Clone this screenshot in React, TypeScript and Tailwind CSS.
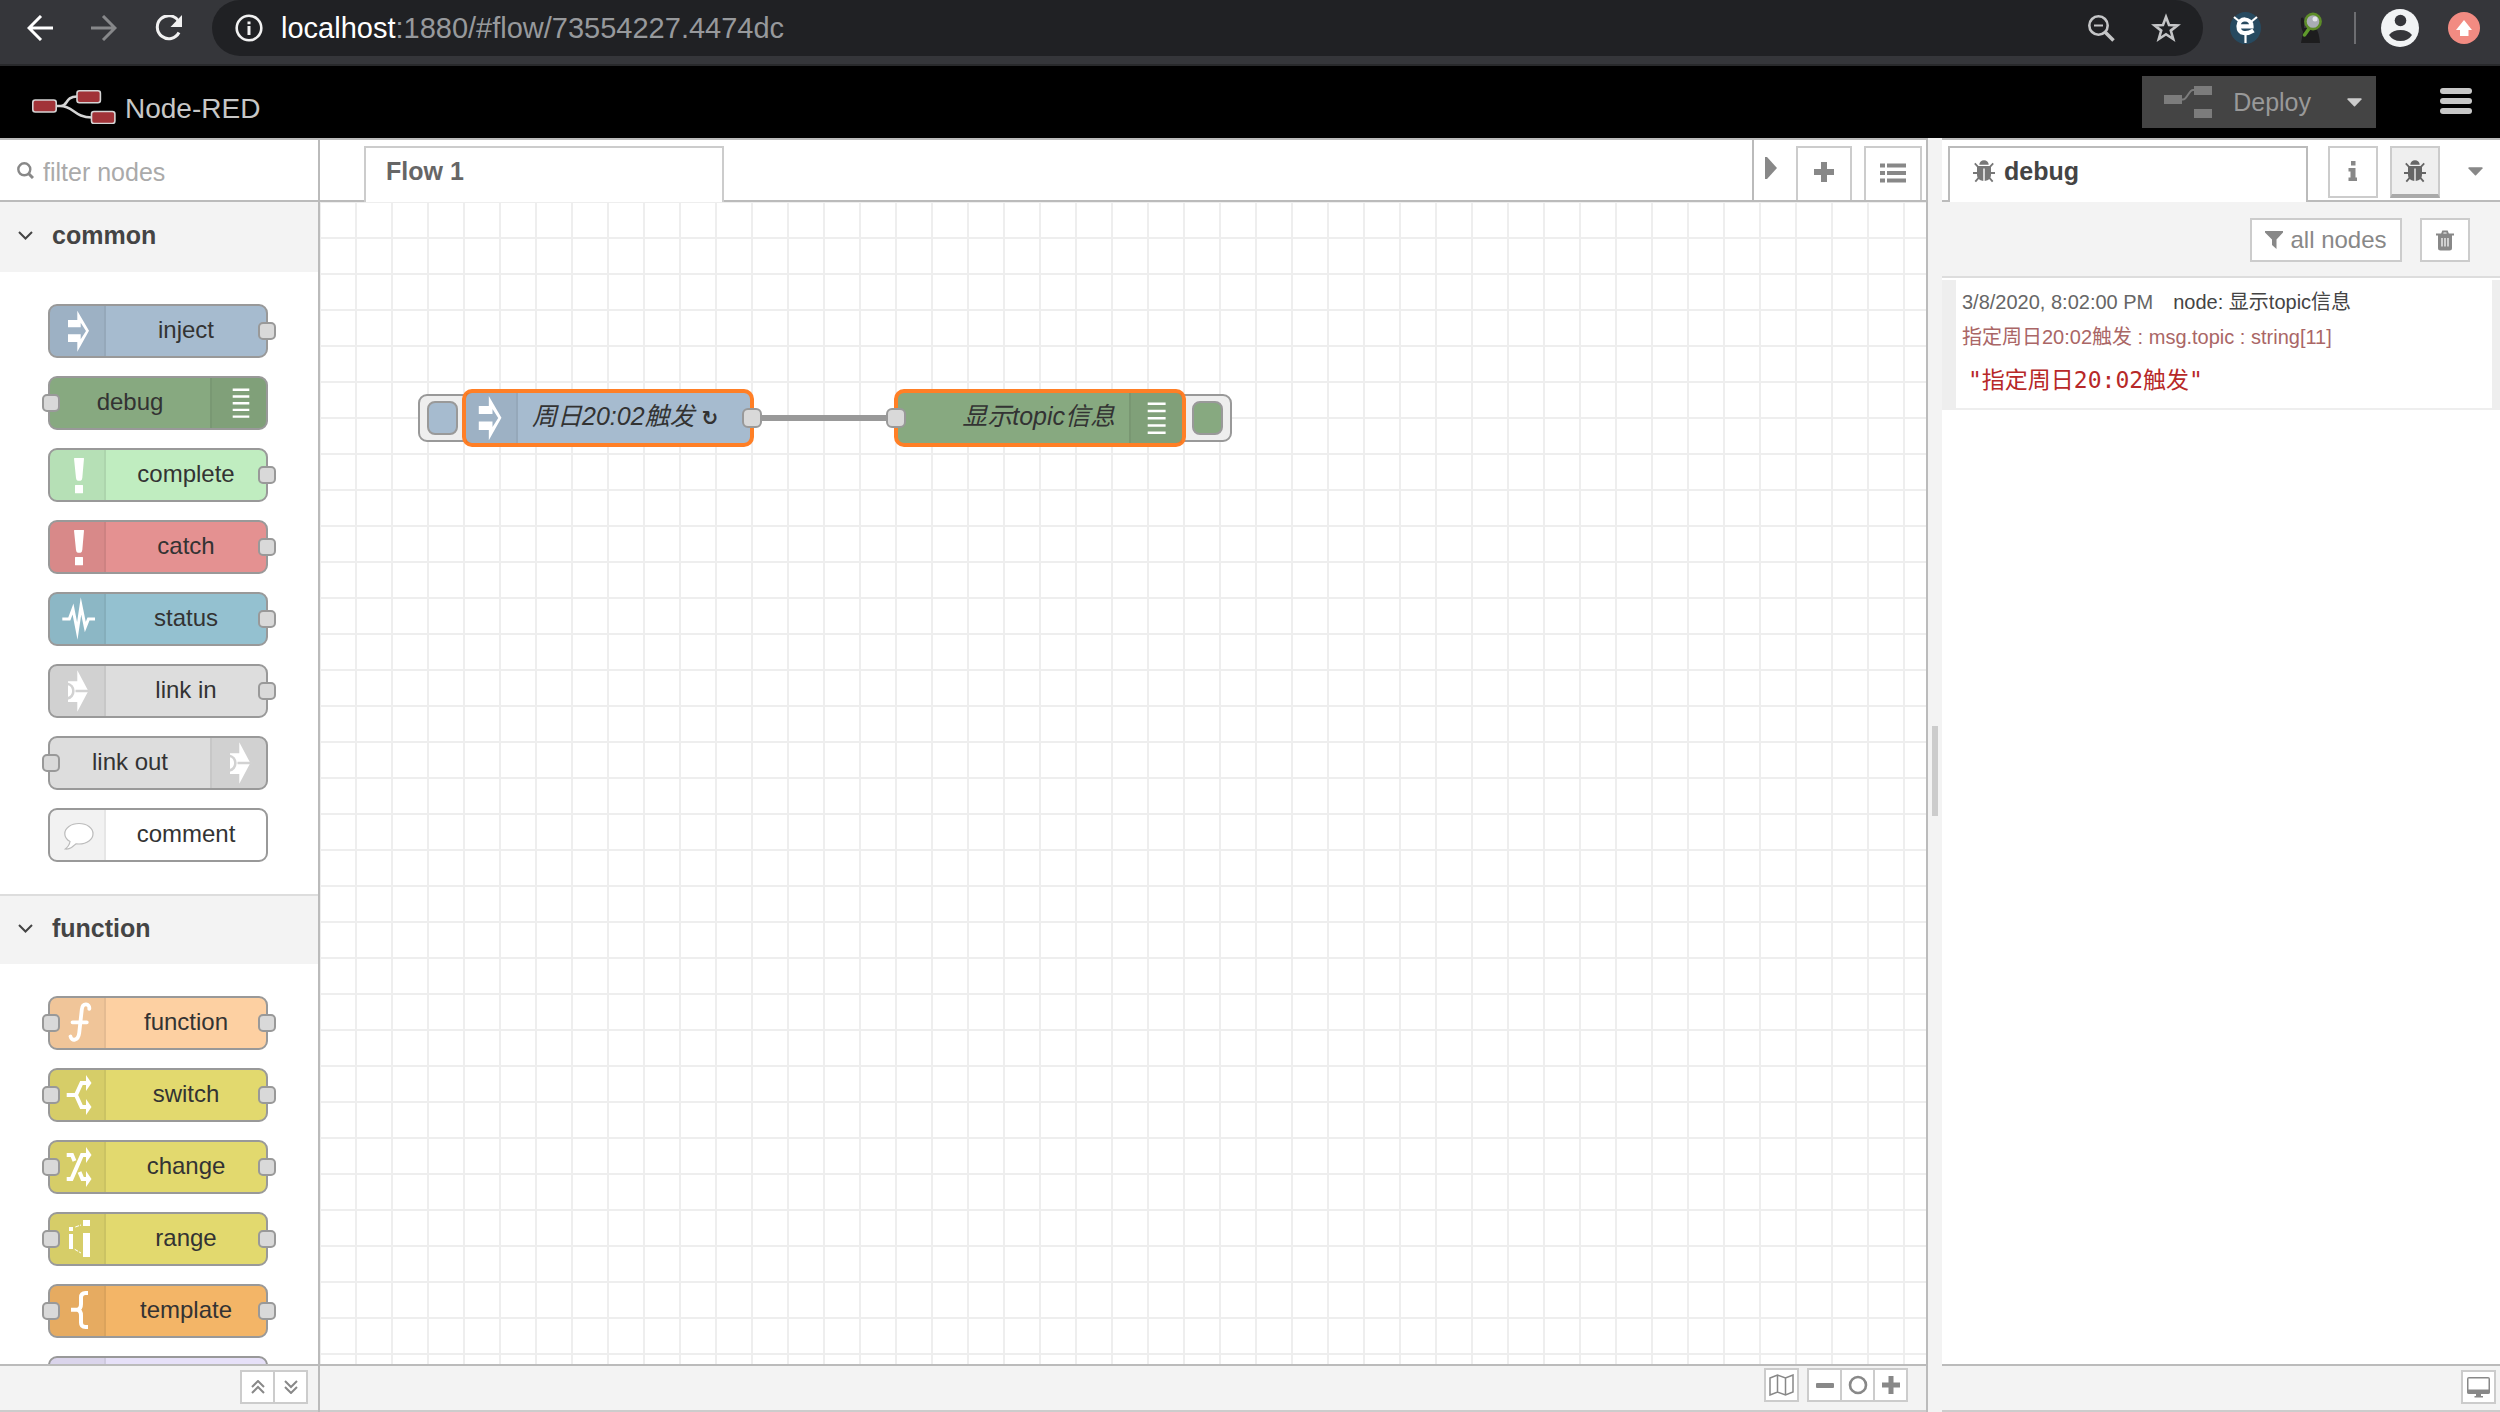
import type { ReactNode } from 'react';

type IconName =
  | 'inject' | 'debug' | 'alert' | 'status' | 'link' | 'comment'
  | 'function' | 'switch' | 'change' | 'range' | 'template' | 'delay';

interface PaletteNode {
  label?: string;
  icon: IconName;
  color: string;
  input?: boolean;
  output?: boolean;
  right?: boolean;
}

const commonNodes: PaletteNode[] = [
  { label: 'inject', icon: 'inject', color: 'bg-[#a6bbcf]', output: true },
  { label: 'debug', icon: 'debug', color: 'bg-[#87a980]', input: true, right: true },
  { label: 'complete', icon: 'alert', color: 'bg-[#c0edc0]', output: true },
  { label: 'catch', icon: 'alert', color: 'bg-[#e49191]', output: true },
  { label: 'status', icon: 'status', color: 'bg-[#94c1d0]', output: true },
  { label: 'link in', icon: 'link', color: 'bg-[#dddddd]', output: true },
  { label: 'link out', icon: 'link', color: 'bg-[#dddddd]', input: true, right: true },
  { label: 'comment', icon: 'comment', color: 'bg-white' },
];

const functionNodes: PaletteNode[] = [
  { label: 'function', icon: 'function', color: 'bg-[#fdd0a2]', input: true, output: true },
  { label: 'switch', icon: 'switch', color: 'bg-[#e2d96e]', input: true, output: true },
  { label: 'change', icon: 'change', color: 'bg-[#e2d96e]', input: true, output: true },
  { label: 'range', icon: 'range', color: 'bg-[#e2d96e]', input: true, output: true },
  { label: 'template', icon: 'template', color: 'bg-[#f3b567]', input: true, output: true },
  { icon: 'delay', color: 'bg-[#e6e0f8]', input: true, output: true },
];

const iconShapes: Record<IconName, ReactNode> = {
  inject: (
    <path fill="#fff" d="M9 14H18.3V4.7L30 24.7 18.3 45.7V36H9V28.3H21.7V33.3L27 25 21.7 16.7V21.3H9Z" />
  ),
  debug: (
    <path stroke="#fff" strokeWidth="2.4" d="M11.7 11.8H28.3M11.7 18.5H28.3M11.7 25.2H28.3M11.7 31.9H28.3M11.7 38.6H28.3" />
  ),
  alert: (
    <path fill="#fff" d="M15.7 8H24.5Q25 8 25 8.5L23.3 28Q23 30.7 21.5 30.7H18.8Q17.3 30.7 17 28L15 8.5Q15 8 15.7 8ZM16.5 35H23.5Q24 35 24 35.5V42.8Q24 43.3 23.5 43.3H16.5Q16 43.3 16 42.8V35.5Q16 35 16.5 35Z" />
  ),
  status: (
    <path fill="none" stroke="#fff" strokeWidth="3" strokeMiterlimit="12" d="M3.3 25H10.3L14 15 18.3 37 22 12 26.3 33 29.5 25H37" />
  ),
  link: (
    <>
      <path fill="#fff" d="M9 15.3H18.3V4.3L29.3 25 18.3 45.7V36H9Z" />
      <path fill="none" stroke="#d2d2d2" strokeWidth="2.6" d="M8.5 17.7A7.6 7.6 0 0 1 8.5 32.5M16.5 25H31" />
    </>
  ),
  comment: (
    <path fill="#fff" stroke="#bbb" strokeWidth="1.2" d="M20 13.5C28 13.5 34 18 34 23.7S28 34 20 34L17 33.8 12.5 37.5Q9.5 39.5 6.3 39Q10.5 35.5 11 31.5C8 29.8 5.8 27 5.8 23.7 5.8 18 12 13.5 20 13.5Z" />
  ),
  function: (
    <path fill="none" stroke="#fff" strokeWidth="3.8" strokeLinecap="round" strokeLinejoin="round" d="M30.3 10.8C31 5.5 23.5 4 22.8 11.5L20.200 35C19.200 43 12.500 43.500 11.500 38.500M13.500 24.300H27.800" />
  ),
  switch: (
    <>
      <path fill="none" stroke="#fff" strokeWidth="4" d="M7.7 25H16.5M28 13H22.5L17 25 22.5 37H28" />
      <path fill="#fff" d="M27 5L32.5 13 27 21ZM27 29L32.5 37 27 45Z" />
    </>
  ),
  change: (
    <>
      <path fill="none" stroke="#fff" strokeWidth="4" d="M7.7 13H13L15.5 19M7.7 37H12.5L23 13H28M20.5 30L23.5 37H28" />
      <path fill="#fff" d="M27 5L32.5 13 27 21ZM27 29L32.5 37 27 45Z" />
    </>
  ),
  range: (
    <>
      <path fill="#fff" d="M10 13H14V17H10ZM10 20H14V35H10ZM24 6H31V12H24ZM24 19H31V43H24Z" />
      <path stroke="#fff" strokeDasharray="4 1" d="M16.3 13L22 11M15.7 35.3L22 39" />
    </>
  ),
  template: (
    <path fill="none" stroke="#fff" strokeWidth="4" d="M29 7H26.5Q22 7 22 11.5V18Q22 23 18.5 23.7H12M29 41H26.5Q22 41 22 36.5V29.5Q22 24.5 18.5 23.7" />
  ),
  delay: <circle cx="20" cy="25" r="13" fill="none" stroke="#fff" strokeWidth="3" />,
};

const NodeIcon = ({ name, className }: { name: IconName; className: string }) => (
  <svg viewBox="0 0 36 50" className={className} aria-hidden="true">{iconShapes[name]}</svg>
);

const PORT = 'absolute w-[18px] h-[18px] rounded-[5px] border-2 border-[#999] bg-[#d9d9d9]';

const PaletteItem = ({ node }: { node: PaletteNode }) => (
  <div className={`relative flex w-[220px] h-[54px] shrink-0 rounded-[9px] border-2 border-[#999] ${node.color} ${node.right ? 'flex-row-reverse' : ''}`}>
    <div className={`flex w-[56px] shrink-0 justify-center bg-black/5 border-black/5 ${node.right ? 'border-l-2 rounded-r-[7px]' : 'border-r-2 rounded-l-[7px]'}`}>
      <NodeIcon name={node.icon} className="w-9 h-[50px]" />
    </div>
    <span className="flex flex-1 items-center justify-center pb-[2px] text-[24px] leading-none text-[#333]">{node.label}</span>
    {node.input && <span className={`${PORT} -left-2 top-4`} />}
    {node.output && <span className={`${PORT} -right-[10px] top-4`} />}
  </div>
);

const PaletteCategory = ({ title, nodes, first }: { title: string; nodes: PaletteNode[]; first?: boolean }) => (
  <section>
    <button className={`flex w-full h-[70px] items-center gap-[19px] pl-[18px] pb-1 bg-[#f3f3f3] ${first ? '' : 'border-t-2 border-[#ddd]'}`}>
      <svg viewBox="0 0 15 9" className="w-[15px] h-[9px]" fill="none" stroke="#444" strokeWidth="2"><path d="M1 1L7.500 7.500 14 1" /></svg>
      <span className="text-[25px] leading-none font-bold text-[#444]">{title}</span>
    </button>
    <div className="flex flex-col gap-[18px] py-8 pl-12">
      {nodes.map((n, i) => <PaletteItem key={i} node={n} />)}
    </div>
  </section>
);

const BugIcon = ({ className }: { className: string }) => (
  <svg viewBox="0 0 22 23" className={className} aria-hidden="true">
    <path fill="currentColor" d="M6.300 4.800A4.700 4.500 0 0 1 15.700 4.800ZM4 6H18V15Q18 20 11.700 21V8.500H10.300V21Q4 20 4 15Z" />
    <path fill="none" stroke="currentColor" strokeWidth="1.800" d="M1.800 3.300L5.500 7.300M20.200 3.300L16.500 7.300M0 13H5M22 13H17M2.300 21.700L6 17.300M19.700 21.700L16 17.300" />
  </svg>
);

const Caret = ({ className }: { className: string }) => (
  <svg viewBox="0 0 16 9" className={className} fill="currentColor" aria-hidden="true"><path d="M1 0H15Q16 .5 15.500 1.200L8.600 8.500Q8 9 7.400 8.500L.5 1.200Q0 .5 1 0Z" /></svg>
);

const BrowserBar = () => (
  <header className="flex h-[66px] shrink-0 items-start border-b-2 border-[#28292b] bg-[#35363a] pl-[27px] pr-5">
    <nav className="flex h-14 items-center gap-[38px] pr-[30px]">
      <button aria-label="Back">
        <svg viewBox="0 0 26 26" className="w-[26px] h-[26px]" fill="none" stroke="#fff" strokeWidth="3"><path d="M26 13H2M14 1L2 13 14 25" /></svg>
      </button>
      <button aria-label="Forward">
        <svg viewBox="0 0 26 26" className="w-[26px] h-[26px]" fill="none" stroke="#87888a" strokeWidth="3"><path d="M0 13H24M12 1L24 13 12 25" /></svg>
      </button>
      <button aria-label="Reload">
        <svg viewBox="0 0 27 27" className="w-[27px] h-[27px]">
          <path fill="none" stroke="#f1f1f1" strokeWidth="3" d="M23.500 6A11.500 11.500 0 1 0 24 17.500" />
          <path fill="#f1f1f1" d="M27 0V12H15.500Z" />
        </svg>
      </button>
    </nav>
    <div className="flex h-14 flex-1 items-center rounded-full bg-[#202124] pl-[23px] pr-[22px]">
      <svg viewBox="0 0 28 28" className="mr-[18px] w-7 h-7" aria-hidden="true">
        <circle cx="14" cy="14" r="12.300" fill="none" stroke="#f1f1f1" strokeWidth="2.600" />
        <path stroke="#f1f1f1" strokeWidth="3" d="M14 12V21M14 7.500V10.300" />
      </svg>
      <span className="flex-1 text-[29px] leading-none text-[#97999c]"><span className="text-white">localhost</span>:1880/#flow/73554227.4474dc</span>
      <button aria-label="Zoom" className="mr-9">
        <svg viewBox="0 0 27 27" className="w-[27px] h-[27px]" fill="none" stroke="#c4c5c7" strokeWidth="2.600">
          <circle cx="10.500" cy="10.500" r="9.200" /><path d="M6 10.500H15" strokeWidth="2" /><path d="M17 17L25.500 25.500" strokeWidth="3.600" />
        </svg>
      </button>
      <button aria-label="Bookmark">
        <svg viewBox="0 0 30 30" className="w-[30px] h-[30px]" fill="none" stroke="#c4c5c7" strokeWidth="2.600">
          <path d="M15 4L18 12 26.500 12.400 19.800 17.600 22.200 26 15 21.200 7.800 26 10.200 17.600 3.500 12.400 12 12Z" />
        </svg>
      </button>
    </div>
    <div className="flex h-14 items-center pl-[27px]">
      <svg viewBox="0 0 31 32" className="w-[31px] h-8" aria-hidden="true">
        <ellipse cx="15.500" cy="16" rx="15.500" ry="16" fill="#274a60" />
        <path fill="none" stroke="#fff" strokeWidth="2.200" d="M4 5L9.500 9.500M27 5L21.500 9.500M15.500 21V31" />
        <path fill="none" stroke="#fff" strokeWidth="4.200" d="M9.500 14.300H21.500C21.500 5.500 8.500 5 8.500 14S17.500 22.300 23.500 18.500" />
      </svg>
      <svg viewBox="0 0 24 32" className="ml-[38px] w-6 h-8" aria-hidden="true">
        <path fill="#1d1d1e" d="M2 6Q5 4 5 9V16H17Q20 20 21 31H2L4 20Q1 14 2 6Z" />
        <path stroke="#5f9a2c" strokeWidth="3.500" strokeLinecap="round" d="M10.500 16L5.500 23" />
        <circle cx="14" cy="9.500" r="7.600" fill="#a9acb5" stroke="#5d8c28" strokeWidth="2.600" />
        <circle cx="16" cy="7" r="2.500" fill="#e2e3e8" />
      </svg>
      <span className="ml-[31px] h-8 w-[2px] bg-[#6d6e71]" />
      <button aria-label="Profile" className="ml-[25px]">
        <svg viewBox="0 0 38 38" className="w-[38px] h-[38px]">
          <circle cx="19" cy="19" r="19" fill="#f1f3f4" /><circle cx="19.500" cy="11.500" r="5.800" fill="#35363a" />
          <path fill="#35363a" d="M8 26Q12 21 19.500 21T31 26Q27 32 19.500 32T8 26Z" />
        </svg>
      </button>
      <button aria-label="Update" className="ml-[29px]">
        <svg viewBox="0 0 32 32" className="w-8 h-8">
          <circle cx="16" cy="16" r="16" fill="#f28b82" /><path fill="#fff" d="M16 8L24 18H20.500V24H12V18H8Z" />
        </svg>
      </button>
    </div>
  </header>
);

const AppHeader = () => (
  <header className="flex h-[72px] shrink-0 items-start justify-between bg-black pl-8 pr-7">
    <h1 className="flex items-end gap-[9px] pt-6">
      <svg viewBox="0 0 84 34" className="w-[84px] h-[34px]" aria-hidden="true">
        <path fill="none" stroke="#d5d5d5" strokeWidth="2.600" d="M24 16H29C36 16 33 6.500 45 6.500M28 16C42 16 42 27.500 60 27.500" />
        <g fill="#a13338" stroke="#d5d5d5" strokeWidth="1.600">
          <rect x=".8" y="10" width="23.400" height="12" rx="2.500" />
          <rect x="45" y=".8" width="23.400" height="12" rx="2.500" />
          <rect x="59.500" y="21.500" width="23.400" height="12" rx="2.500" />
        </g>
      </svg>
      <span className="pb-[1px] text-[28px] leading-none text-[#c7c7c7]">Node-RED</span>
    </h1>
    <div className="flex items-start pt-[10px]">
      <div className="flex h-[52px] bg-[#444]">
        <button className="flex items-center gap-[21px] pl-[22px]">
          <svg viewBox="0 0 48 32" className="w-12 h-8" aria-hidden="true">
            <path fill="#7c7c7c" d="M0 9H18V18H0ZM30 0H48V9H30ZM30 23H48V32H30Z" />
            <path fill="none" stroke="#7c7c7c" strokeWidth="2" d="M17 13.500H19C23 13.500 25 4 29 4H31" />
          </svg>
          <span className="text-[25px] leading-none text-[#999]">Deploy</span>
        </button>
        <button aria-label="Deploy options" className="flex items-center pl-9 pr-[14px] text-[#ccc]"><Caret className="w-[15px] h-[9px]" /></button>
      </div>
      <button aria-label="Menu" className="ml-16 mt-3 flex w-8 flex-col gap-1">
        <span className="h-[6px] w-full rounded-sm bg-[#c7c7c7]" />
        <span className="h-[6px] w-full rounded-sm bg-[#c7c7c7]" />
        <span className="h-[6px] w-full rounded-sm bg-[#c7c7c7]" />
      </button>
    </div>
  </header>
);

const FOOTER = 'flex h-[48px] shrink-0 items-start justify-end border-t-2 border-b-2 border-t-[#bbb] border-b-[#ccc] bg-[#f3f3f3]';
const FOOTER_BTN = 'flex w-[35px] h-[34px] items-center justify-center border-2 border-[#ccc] bg-white';

const Palette = () => (
  <aside className="flex w-[320px] shrink-0 flex-col border-r-2 border-t-2 border-[#bbb] bg-white">
    <label className="flex h-[62px] shrink-0 items-center gap-[9px] border-b-2 border-[#bbb] pl-[17px]">
      <svg viewBox="0 0 17 17" className="w-[17px] h-[17px] shrink-0" fill="none" stroke="#888" strokeWidth="2.400" aria-hidden="true">
        <circle cx="7.300" cy="7.300" r="6" /><path strokeWidth="3" d="M11.500 11.500L16 16" />
      </svg>
      <input type="text" aria-label="filter nodes" placeholder="filter nodes" className="w-full pt-1 text-[25px] leading-8 outline-none placeholder:text-[#aaa]" />
    </label>
    <div className="min-h-0 flex-1 overflow-hidden">
      <PaletteCategory title="common" nodes={commonNodes} first />
      <PaletteCategory title="function" nodes={functionNodes} />
    </div>
    <footer className={`${FOOTER} pt-1 pr-[10px]`}>
      <button aria-label="Collapse all" className={FOOTER_BTN}>
        <svg viewBox="0 0 14 14" className="w-[14px] h-[14px]" fill="none" stroke="#888" strokeWidth="2"><path d="M1 7L7 1 13 7M1 13L7 7 13 13" /></svg>
      </button>
      <button aria-label="Expand all" className={`${FOOTER_BTN} -ml-[2px]`}>
        <svg viewBox="0 0 14 14" className="w-[14px] h-[14px]" fill="none" stroke="#888" strokeWidth="2"><path d="M1 1L7 7 13 1M1 7L7 13 13 7" /></svg>
      </button>
    </footer>
  </aside>
);

const FLOW_PORT = 'absolute top-[206px] w-5 h-5 rounded-[6px] border-2 border-[#999] bg-[#d9d9d9]';

const Canvas = () => (
  <div className="relative min-h-0 flex-1 overflow-hidden bg-white bg-[linear-gradient(to_right,#eee_2px,transparent_2px),linear-gradient(to_bottom,#eee_2px,transparent_2px)] bg-[size:36px_36px] bg-[position:-1px_-1px]">
    {/* wire */}
    <div className="absolute left-[432px] top-[213px] h-[6px] w-[144px] bg-[#999]" />

    {/* inject node with its trigger button */}
    <button aria-label="Trigger" className="absolute left-[98px] top-[192px] flex h-12 w-[60px] items-center rounded-[9px] border-2 border-[#999] bg-[#eee] pl-[7px]">
      <span className="h-[34px] w-[31px] rounded-[8px] border-2 border-[#999] bg-[#a6bbcf]" />
    </button>
    <div className="absolute left-[142px] top-[187px] flex h-[58px] w-[292px] rounded-[10px] border-4 border-[#ff7f26] bg-[#a6bbcf]">
      <div className="flex w-[52px] shrink-0 items-center border-r-2 border-black/5 bg-black/5 pl-[3px]">
        <NodeIcon name="inject" className="w-[39px] h-[54px] shrink-0" />
      </div>
      <span className="flex flex-1 items-center whitespace-nowrap pb-1 pl-[14px] text-[25px] leading-none italic text-[#333]">
        周日20:02触发&nbsp;<span className="pt-1 font-['DejaVu_Sans'] text-[20px] font-bold not-italic">↻</span>
      </span>
    </div>
    <span className={`${FLOW_PORT} left-[422px]`} />

    {/* debug node with its toggle button */}
    <button aria-label="Toggle output" className="absolute left-[852px] top-[192px] flex h-12 w-[60px] items-center justify-end rounded-[9px] border-2 border-[#999] bg-[#eee] pr-[7px]">
      <span className="h-[34px] w-[31px] rounded-[8px] border-2 border-[#999] bg-[#87a980]" />
    </button>
    <div className="absolute left-[574px] top-[187px] flex h-[58px] w-[292px] rounded-[10px] border-4 border-[#ff7f26] bg-[#87a980]">
      <span className="flex flex-1 items-center justify-end whitespace-nowrap pb-1 pr-[14px] text-[25px] leading-none italic text-[#333]">显示topic信息</span>
      <div className="flex w-[53px] shrink-0 items-center border-l-2 border-black/5 bg-black/5 pl-1">
        <NodeIcon name="debug" className="w-[39px] h-[54px] shrink-0" />
      </div>
    </div>
    <span className={`${FLOW_PORT} left-[566px]`} />
  </div>
);

const Workspace = () => (
  <main className="flex min-w-0 flex-1 flex-col border-r-2 border-t-2 border-[#bbb]">
    <div className="flex h-[62px] shrink-0 items-stretch bg-white">
      <span className="w-11 border-b-2 border-[#bbb]" />
      <div className="mt-[6px] flex w-[360px] items-center border-2 border-b-0 border-[#ccc] pb-2 pl-5">
        <a href="#flow" className="text-[25px] leading-none font-bold text-[#666]">Flow 1</a>
      </div>
      <span className="flex-1 border-b-2 border-[#bbb]" />
      <div className="flex items-stretch border-b-2 border-l-2 border-[#bbb] pr-1">
        <button aria-label="Scroll tabs" className="flex w-[42px] items-start pl-[11px] pt-[17px]">
          <svg viewBox="0 0 12 22" className="w-3 h-[22px]" fill="#888"><path d="M0 0H2L12 11 2 22H0Z" /></svg>
        </button>
        <button aria-label="Add flow" className="mt-[6px] flex w-14 items-center justify-center border-2 border-b-0 border-[#ccc] pb-1">
          <svg viewBox="0 0 20 20" className="w-5 h-5" stroke="#888" strokeWidth="6"><path d="M10 0V20M0 10H20" /></svg>
        </button>
        <button aria-label="List flows" className="ml-3 mt-[6px] flex w-[58px] items-center justify-center border-2 border-b-0 border-[#ccc] pb-[2px]">
          <svg viewBox="0 0 26 20" className="w-[26px] h-5" stroke="#888" strokeWidth="4"><path d="M0 2.500H5M7 2.500H26M0 10H5M7 10H26M0 17.500H5M7 17.500H26" /></svg>
        </button>
      </div>
    </div>
    <Canvas />
    <footer className={`${FOOTER} pr-[18px] pt-[2px]`}>
      <button aria-label="Navigator" className={`${FOOTER_BTN} mr-2`}>
        <svg viewBox="0 0 25 22" className="w-[25px] h-[22px]" fill="none" stroke="#888" strokeWidth="1.500"><path d="M1 4L8.500 1 16.500 4 24 1V18L16.500 21 8.500 18 1 21ZM8.500 1V18M16.500 4V21" /></svg>
      </button>
      <button aria-label="Zoom out" className={FOOTER_BTN}>
        <svg viewBox="0 0 18 5" className="w-[18px] h-[5px]"><rect width="18" height="5" rx="1" fill="#888" /></svg>
      </button>
      <button aria-label="Reset zoom" className={`${FOOTER_BTN} -ml-[2px]`}>
        <svg viewBox="0 0 20 20" className="w-5 h-5" fill="none" stroke="#888" strokeWidth="2.600"><circle cx="10" cy="10" r="8" /></svg>
      </button>
      <button aria-label="Zoom in" className={`${FOOTER_BTN} -ml-[2px]`}>
        <svg viewBox="0 0 18 18" className="w-[18px] h-[18px]" stroke="#888" strokeWidth="5"><path d="M9 0V18M0 9H18" /></svg>
      </button>
    </footer>
  </main>
);

const Sidebar = () => (
  <aside className="flex w-[558px] shrink-0 flex-col border-t-2 border-[#bbb] bg-white">
    <div className="flex h-[62px] shrink-0">
      <span className="w-[6px] border-b-2 border-[#bbb]" />
      <div className="mt-[6px] flex w-[360px] items-center gap-[9px] border-2 border-b-0 border-[#bbb] pb-2 pl-[23px]">
        <BugIcon className="w-[22px] h-[23px] text-[#777]" />
        <a href="#debug" className="text-[25px] leading-none font-bold text-[#444]">debug</a>
      </div>
      <div className="flex flex-1 items-start border-b-2 border-[#bbb] pl-5 pt-[6px]">
        <button aria-label="Info" className="flex h-[52px] w-[50px] items-center justify-center border-2 border-[#ccc] bg-white pb-[2px]">
          <svg viewBox="0 0 10 20" className="w-[10px] h-5" fill="#888"><path d="M3 0H7.500V4.500H3ZM.5 7H7.500V16.500H9V20H.5V16.500H2.500V10.500H.5Z" /></svg>
        </button>
        <button aria-label="Debug messages" className="ml-3 flex h-[52px] w-[50px] items-center justify-center border-2 border-b-4 border-[#ccc] border-b-[#aaa] bg-[#efefef] text-[#666]">
          <BugIcon className="w-[22px] h-[23px]" />
        </button>
        <button aria-label="More tabs" className="ml-[28px] mt-[21px] text-[#888]"><Caret className="w-[15px] h-[9px]" /></button>
      </div>
    </div>
    <div className="flex h-[76px] shrink-0 items-start justify-end gap-[18px] border-b-2 border-[#ddd] bg-[#f3f3f3] pr-[30px] pt-4">
      <button className="flex h-11 w-[152px] items-center justify-center gap-[7px] border-2 border-[#ccc] bg-white text-[24px] leading-none text-[#888]">
        <svg viewBox="0 0 18 18" className="w-[18px] h-[18px]" fill="#888" aria-hidden="true"><path d="M0 0H18V1.500L11.500 8.500V18L7 14V8.500L0 1.500Z" /></svg>
        <span>all nodes</span>
      </button>
      <button aria-label="Clear messages" className="flex h-11 w-[50px] items-center justify-center border-2 border-[#ccc] bg-white">
        <svg viewBox="0 0 18 21" className="w-[18px] h-[21px]" fill="none" stroke="#888"><path strokeWidth="2" d="M0 4.500H18M6 4L7 1.500H11L12 4" /><path strokeWidth="2" fill="#888" d="M3 5H15V18Q15 19.500 13.500 19.500H4.500Q3 19.500 3 18Z" /><path stroke="#fff" strokeWidth="1.200" d="M6 8V16.500M9 8V16.500M12 8V16.500" /></svg>
      </button>
    </div>
    <div className="min-h-0 flex-1 overflow-hidden pt-[2px]">
      <article className="flex flex-col border-b-2 border-l-[14px] border-r-8 border-[#eee] pt-[10px] pb-[14px] pl-[6px] text-[20px]">
        <div className="flex h-6 items-center gap-5">
          <time className="text-[#666]">3/8/2020, 8:02:00 PM</time>
          <a href="#node" className="text-[#444]">node: 显示topic信息</a>
        </div>
        <p className="mt-[11px] h-6 leading-6 text-[#a66]">指定周日20:02触发 : msg.topic : string[11]</p>
        <p className="mt-[17px] h-7 font-['DejaVu_Sans_Mono','Noto_Sans_CJK_SC',monospace] text-[23px] leading-7 pl-[6px] text-[#b72828]">"指定周日20:02触发"</p>
      </article>
    </div>
    <footer className={`${FOOTER} pr-1 pt-1`}>
      <button aria-label="Open debug window" className={FOOTER_BTN}>
        <svg viewBox="0 0 23 21" className="w-[23px] h-[21px]" aria-hidden="true"><path fill="#888" d="M2 0H21Q23 0 23 2V15.500Q23 17 21 17H14V19H16V20.500H7.500V19H9V17H2Q0 17 0 15.500V2Q0 0 2 0Z" /><path fill="#fff" d="M1.500 1.500H21.500V12.500H1.500Z" /></svg>
      </button>
    </footer>
  </aside>
);

const App = () => {
  return (
    <div className="flex h-screen flex-col overflow-hidden bg-white font-['Liberation_Sans','Noto_Sans_CJK_SC',sans-serif]">
      <BrowserBar />
      <AppHeader />
      <div className="flex min-h-0 flex-1">
        <Palette />
        <Workspace />
        {/* sidebar drag handle */}
        <div className="flex w-[14px] shrink-0 items-center justify-center bg-[#f3f3f3] pb-2">
          <span className="h-[90px] w-[6px] bg-[#ccc]" />
        </div>
        <Sidebar />
      </div>
    </div>
  );
};

export default App;
